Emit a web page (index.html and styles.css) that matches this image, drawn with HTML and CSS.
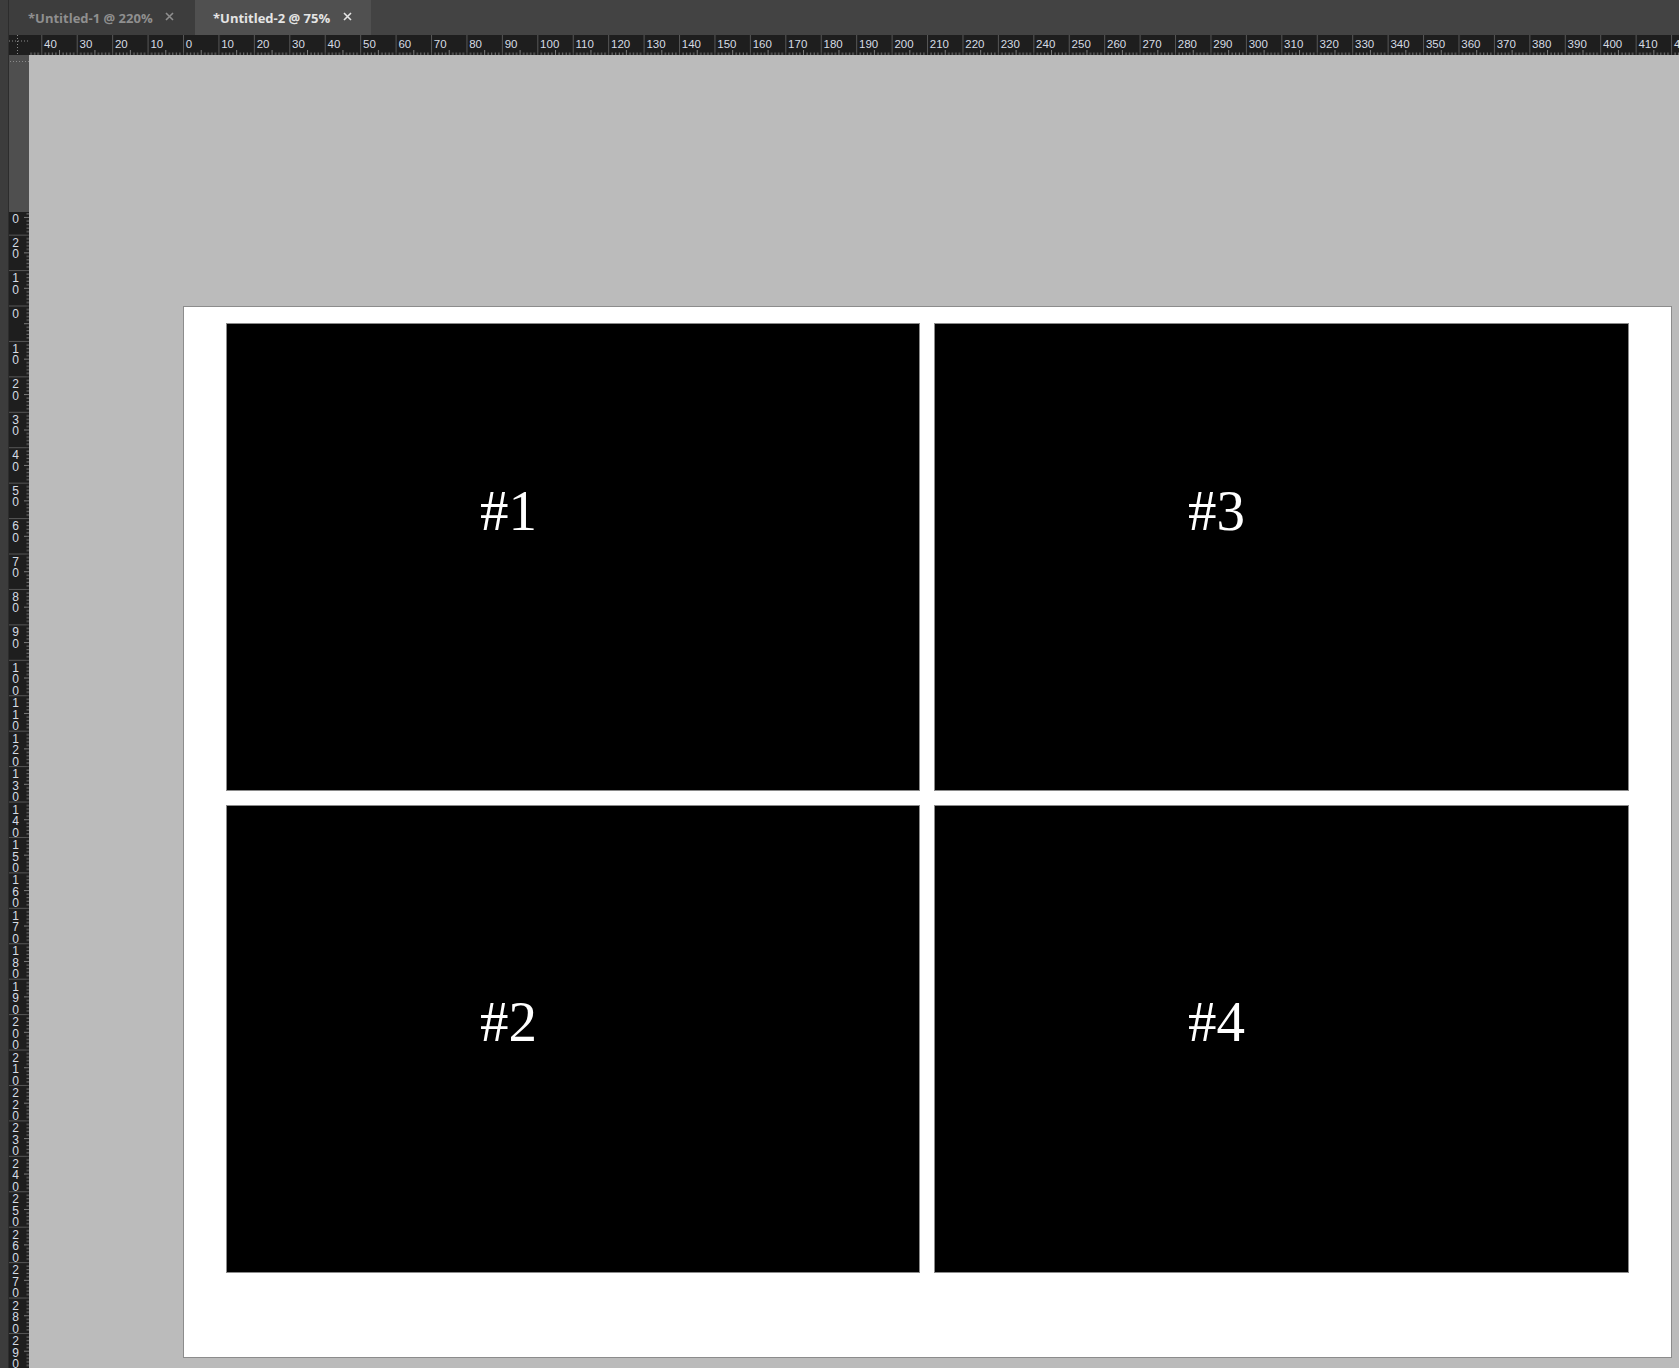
FILE: index.html
```html
<!DOCTYPE html>
<html lang="en">
<head>
<meta charset="utf-8">
<title>Untitled-2 @ 75%</title>
<link rel="stylesheet" href="styles.css">
</head>
<body>
<div class="app">
  <div class="edge"></div>
  <div class="main">
    <div class="tabs">
      <div class="tab">
        <span class="tab-title">*Untitled-1 @ 220%</span>
        <svg class="tab-close" width="9" height="9" viewBox="0 0 9 9"><path d="M1 1L8 8M8 1L1 8"/></svg>
      </div>
      <div class="tab tab--active">
        <span class="tab-title">*Untitled-2 @ 75%</span>
        <svg class="tab-close" width="9" height="9" viewBox="0 0 9 9"><path d="M1 1L8 8M8 1L1 8"/></svg>
      </div>
    </div>
    <div class="workspace">
      <div class="corner">
        <svg width="20" height="20" viewBox="0 0 20 20">
          <line class="dots" x1="0" y1="6" x2="20" y2="6"/>
          <line class="dots" x1="8.5" y1="0" x2="8.5" y2="20"/>
        </svg>
      </div>
      <div class="hruler">
        <svg width="1650" height="20" viewBox="0 0 1650 20">
          <defs>
            <pattern id="hticks" patternUnits="userSpaceOnUse" x="12.28" y="0" width="35.43" height="20">
              <rect class="major" x="0" y="0" width="1" height="20"/>
              <rect class="minor" x="3.54" y="17.5" width="1" height="2.5"/>
              <rect class="minor" x="7.09" y="17.5" width="1" height="2.5"/>
              <rect class="minor" x="10.63" y="17.5" width="1" height="2.5"/>
              <rect class="minor" x="14.17" y="17.5" width="1" height="2.5"/>
              <rect class="minor" x="17.72" y="15" width="1" height="5"/>
              <rect class="minor" x="21.26" y="17.5" width="1" height="2.5"/>
              <rect class="minor" x="24.80" y="17.5" width="1" height="2.5"/>
              <rect class="minor" x="28.34" y="17.5" width="1" height="2.5"/>
              <rect class="minor" x="31.89" y="17.5" width="1" height="2.5"/>
            </pattern>
          </defs>
          <rect x="0" y="0" width="1650" height="20" fill="url(#hticks)"/>
          <g class="rl-text">
            <text x="15.1" y="12.7">40</text>
            <text x="50.5" y="12.7">30</text>
            <text x="85.9" y="12.7">20</text>
            <text x="121.4" y="12.7">10</text>
            <text x="156.8" y="12.7">0</text>
            <text x="192.2" y="12.7">10</text>
            <text x="227.7" y="12.7">20</text>
            <text x="263.1" y="12.7">30</text>
            <text x="298.5" y="12.7">40</text>
            <text x="334.0" y="12.7">50</text>
            <text x="369.4" y="12.7">60</text>
            <text x="404.8" y="12.7">70</text>
            <text x="440.2" y="12.7">80</text>
            <text x="475.7" y="12.7">90</text>
            <text x="511.1" y="12.7">100</text>
            <text x="546.5" y="12.7">110</text>
            <text x="582.0" y="12.7">120</text>
            <text x="617.4" y="12.7">130</text>
            <text x="652.8" y="12.7">140</text>
            <text x="688.3" y="12.7">150</text>
            <text x="723.7" y="12.7">160</text>
            <text x="759.1" y="12.7">170</text>
            <text x="794.5" y="12.7">180</text>
            <text x="830.0" y="12.7">190</text>
            <text x="865.4" y="12.7">200</text>
            <text x="900.8" y="12.7">210</text>
            <text x="936.3" y="12.7">220</text>
            <text x="971.7" y="12.7">230</text>
            <text x="1007.1" y="12.7">240</text>
            <text x="1042.6" y="12.7">250</text>
            <text x="1078.0" y="12.7">260</text>
            <text x="1113.4" y="12.7">270</text>
            <text x="1148.8" y="12.7">280</text>
            <text x="1184.3" y="12.7">290</text>
            <text x="1219.7" y="12.7">300</text>
            <text x="1255.1" y="12.7">310</text>
            <text x="1290.6" y="12.7">320</text>
            <text x="1326.0" y="12.7">330</text>
            <text x="1361.4" y="12.7">340</text>
            <text x="1396.9" y="12.7">350</text>
            <text x="1432.3" y="12.7">360</text>
            <text x="1467.7" y="12.7">370</text>
            <text x="1503.1" y="12.7">380</text>
            <text x="1538.6" y="12.7">390</text>
            <text x="1574.0" y="12.7">400</text>
            <text x="1609.4" y="12.7">410</text>
            <text x="1644.9" y="12.7">420</text>
          </g>
        </svg>
      </div>
      <div class="vruler">
        <svg width="20" height="1313" viewBox="0 0 20 1313">
          <defs>
            <pattern id="vticks" patternUnits="userSpaceOnUse" x="0" y="2.49" width="20" height="35.43">
              <rect class="major" x="0" y="0" width="20" height="1"/>
              <rect class="minor" x="17.5" y="3.54" width="2.5" height="1"/>
              <rect class="minor" x="17.5" y="7.09" width="2.5" height="1"/>
              <rect class="minor" x="17.5" y="10.63" width="2.5" height="1"/>
              <rect class="minor" x="17.5" y="14.17" width="2.5" height="1"/>
              <rect class="minor" x="15" y="17.72" width="5" height="1"/>
              <rect class="minor" x="17.5" y="21.26" width="2.5" height="1"/>
              <rect class="minor" x="17.5" y="24.80" width="2.5" height="1"/>
              <rect class="minor" x="17.5" y="28.34" width="2.5" height="1"/>
              <rect class="minor" x="17.5" y="31.89" width="2.5" height="1"/>
            </pattern>
          </defs>
          <rect x="0" y="0" width="20" height="1313" fill="url(#vticks)"/>
          <g class="rl-text rl-text--v">
            <text x="6.5" y="156.2">3<tspan x="6.5" dy="11.5">0</tspan></text>
            <text x="6.5" y="191.6">2<tspan x="6.5" dy="11.5">0</tspan></text>
            <text x="6.5" y="227.1">1<tspan x="6.5" dy="11.5">0</tspan></text>
            <text x="6.5" y="262.5">0</text>
            <text x="6.5" y="297.9">1<tspan x="6.5" dy="11.5">0</tspan></text>
            <text x="6.5" y="333.4">2<tspan x="6.5" dy="11.5">0</tspan></text>
            <text x="6.5" y="368.8">3<tspan x="6.5" dy="11.5">0</tspan></text>
            <text x="6.5" y="404.2">4<tspan x="6.5" dy="11.5">0</tspan></text>
            <text x="6.5" y="439.7">5<tspan x="6.5" dy="11.5">0</tspan></text>
            <text x="6.5" y="475.1">6<tspan x="6.5" dy="11.5">0</tspan></text>
            <text x="6.5" y="510.5">7<tspan x="6.5" dy="11.5">0</tspan></text>
            <text x="6.5" y="545.9">8<tspan x="6.5" dy="11.5">0</tspan></text>
            <text x="6.5" y="581.4">9<tspan x="6.5" dy="11.5">0</tspan></text>
            <text x="6.5" y="616.8">1<tspan x="6.5" dy="11.5">0</tspan><tspan x="6.5" dy="11.5">0</tspan></text>
            <text x="6.5" y="652.2">1<tspan x="6.5" dy="11.5">1</tspan><tspan x="6.5" dy="11.5">0</tspan></text>
            <text x="6.5" y="687.7">1<tspan x="6.5" dy="11.5">2</tspan><tspan x="6.5" dy="11.5">0</tspan></text>
            <text x="6.5" y="723.1">1<tspan x="6.5" dy="11.5">3</tspan><tspan x="6.5" dy="11.5">0</tspan></text>
            <text x="6.5" y="758.5">1<tspan x="6.5" dy="11.5">4</tspan><tspan x="6.5" dy="11.5">0</tspan></text>
            <text x="6.5" y="794.0">1<tspan x="6.5" dy="11.5">5</tspan><tspan x="6.5" dy="11.5">0</tspan></text>
            <text x="6.5" y="829.4">1<tspan x="6.5" dy="11.5">6</tspan><tspan x="6.5" dy="11.5">0</tspan></text>
            <text x="6.5" y="864.8">1<tspan x="6.5" dy="11.5">7</tspan><tspan x="6.5" dy="11.5">0</tspan></text>
            <text x="6.5" y="900.2">1<tspan x="6.5" dy="11.5">8</tspan><tspan x="6.5" dy="11.5">0</tspan></text>
            <text x="6.5" y="935.7">1<tspan x="6.5" dy="11.5">9</tspan><tspan x="6.5" dy="11.5">0</tspan></text>
            <text x="6.5" y="971.1">2<tspan x="6.5" dy="11.5">0</tspan><tspan x="6.5" dy="11.5">0</tspan></text>
            <text x="6.5" y="1006.5">2<tspan x="6.5" dy="11.5">1</tspan><tspan x="6.5" dy="11.5">0</tspan></text>
            <text x="6.5" y="1042.0">2<tspan x="6.5" dy="11.5">2</tspan><tspan x="6.5" dy="11.5">0</tspan></text>
            <text x="6.5" y="1077.4">2<tspan x="6.5" dy="11.5">3</tspan><tspan x="6.5" dy="11.5">0</tspan></text>
            <text x="6.5" y="1112.8">2<tspan x="6.5" dy="11.5">4</tspan><tspan x="6.5" dy="11.5">0</tspan></text>
            <text x="6.5" y="1148.3">2<tspan x="6.5" dy="11.5">5</tspan><tspan x="6.5" dy="11.5">0</tspan></text>
            <text x="6.5" y="1183.7">2<tspan x="6.5" dy="11.5">6</tspan><tspan x="6.5" dy="11.5">0</tspan></text>
            <text x="6.5" y="1219.1">2<tspan x="6.5" dy="11.5">7</tspan><tspan x="6.5" dy="11.5">0</tspan></text>
            <text x="6.5" y="1254.5">2<tspan x="6.5" dy="11.5">8</tspan><tspan x="6.5" dy="11.5">0</tspan></text>
            <text x="6.5" y="1290.0">2<tspan x="6.5" dy="11.5">9</tspan><tspan x="6.5" dy="11.5">0</tspan></text>
          </g>
          <rect class="vr-cover" x="0" y="0" width="20" height="157"/>
          <line class="dots" x1="1" y1="6.5" x2="20" y2="6.5"/>
        </svg>
      </div>
      <div class="canvas">
        <div class="document">
          <div class="cell cell--top"><span class="cell-label">#1</span></div>
          <div class="cell cell--top"><span class="cell-label">#3</span></div>
          <div class="cell cell--bottom"><span class="cell-label">#2</span></div>
          <div class="cell cell--bottom"><span class="cell-label">#4</span></div>
        </div>
      </div>
    </div>
  </div>
</div>
</body>
</html>
```

FILE: styles.css
```css
* { box-sizing: border-box; }

html, body {
  margin: 0;
  padding: 0;
  background: #3b3b3b;
  overflow: hidden;
}

.app {
  display: flex;
  width: 1679px;
  height: 1368px;
}

.edge {
  width: 9px;
  flex: 0 0 9px;
  background: #3c3c3c;
  border-right: 1px solid #2c2c2c;
}

.main {
  flex: 1;
  display: flex;
  flex-direction: column;
  min-width: 0;
}

/* ---------- tabs ---------- */
.tabs {
  height: 35px;
  flex: 0 0 35px;
  display: flex;
  background: #434343;
}

.tab {
  display: flex;
  align-items: flex-start;
  width: 186px;
  padding: 9px 21px 0 19px;
  background: #3d3d3d;
  font-family: "Open Sans", "Liberation Sans", sans-serif;
  font-size: 13px;
  font-weight: 700;
  line-height: 18px;
  color: #8f8f8f;
}

.tab--active {
  width: 176px;
  padding: 9px 19px 0 18px;
  background: #505050;
  color: #e4e4e4;
}

.tab-title {
  white-space: nowrap;
}

.tab-close {
  margin-left: auto;
  margin-top: 3px;
  flex: 0 0 9px;
  stroke: currentColor;
  stroke-width: 1.6;
  fill: none;
}

/* ---------- rulers ---------- */
.workspace {
  flex: 1;
  display: grid;
  grid-template-columns: 20px 1fr;
  grid-template-rows: 20px 1fr;
  min-height: 0;
}

.corner,
.hruler,
.vruler {
  background: #1e1e1e;
  overflow: hidden;
}

.corner svg,
.hruler svg,
.vruler svg {
  display: block;
}

.major { fill: #565656; }
.minor { fill: #7c7c7c; }

.dots {
  stroke: #8a8a8a;
  stroke-width: 1;
  stroke-dasharray: 1 2;
}

.rl-text text {
  font-family: "Liberation Sans", Arial, sans-serif;
  font-size: 11.5px;
  fill: #d6dce4;
}

.rl-text--v text {
  text-anchor: middle;
  font-size: 12px;
}

.vr-cover { fill: #4f4f4f; }

/* ---------- canvas ---------- */
.canvas {
  background: #bbbbbb;
  overflow: hidden;
  padding: 251px 0 0 154px;
}

.document {
  width: 1489px;
  height: 1052px;
  background: #ffffff;
  border: 1px solid #8c8c8c;
  padding: 16px 42px 0 42px;
  display: grid;
  grid-template-columns: 694px 695px;
  grid-template-rows: 468px 468px;
  column-gap: 14px;
  row-gap: 14px;
}

.cell {
  background: #000000;
  border: 1px solid #8a8a8a;
  padding-left: 253px;
}

.cell--top { padding-top: 158px; }
.cell--bottom { padding-top: 187px; }

.cell-label {
  display: block;
  font-family: "Liberation Serif", "Times New Roman", serif;
  font-size: 57px;
  line-height: 57px;
  color: #ffffff;
}
```
